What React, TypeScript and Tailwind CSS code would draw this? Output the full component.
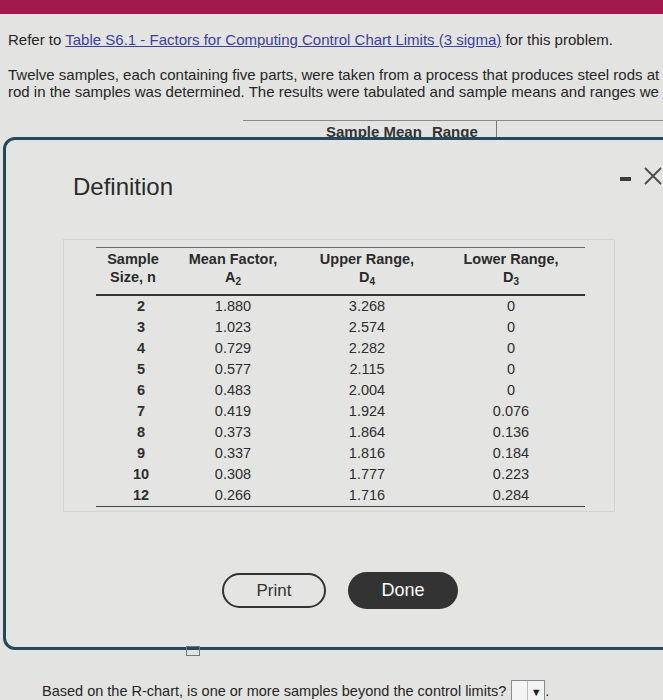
const rows: [string, string, string, string][] = [
  ["2", "1.880", "3.268", "0"],
  ["3", "1.023", "2.574", "0"],
  ["4", "0.729", "2.282", "0"],
  ["5", "0.577", "2.115", "0"],
  ["6", "0.483", "2.004", "0"],
  ["7", "0.419", "1.924", "0.076"],
  ["8", "0.373", "1.864", "0.136"],
  ["9", "0.337", "1.816", "0.184"],
  ["10", "0.308", "1.777", "0.223"],
  ["12", "0.266", "1.716", "0.284"],
];

const cols = "grid grid-cols-[90px_94px_174px_114px_17px]";

function FactorTable() {
  return (
    <div className="ml-[57px] mt-[38px] w-[552px] border border-[#d4d4d4] pb-[4px] pl-[32px] pt-[7px]">
      <div className="w-[489px] border-t-[1.5px] border-[#6a6a6a]">
        <div className={`${cols} border-b-2 border-[#333] pb-[8px] pt-[2px] text-[14.5px] font-bold leading-[18px] text-[#2b2b2b]`}>
          <div className="pr-[16px] text-center">
            Sample
            <br />
            Size, n
          </div>
          <div className="text-center">
            Mean Factor,
            <br />
            A<sub className="text-[10px]">2</sub>
          </div>
          <div className="text-center">
            Upper Range,
            <br />
            D<sub className="text-[10px]">4</sub>
          </div>
          <div className="text-center">
            Lower Range,
            <br />
            D<sub className="text-[10px]">3</sub>
          </div>
          <div />
        </div>
        <div className="border-b border-[#444]">
          {rows.map((r) => (
            <div key={r[0]} className={`${cols} h-[21px] items-center text-[14.5px] text-[#2e2e2e]`}>
              <div className="text-center font-bold">{r[0]}</div>
              <div className="text-center">{r[1]}</div>
              <div className="text-center">{r[2]}</div>
              <div className="text-center">{r[3]}</div>
              <div />
            </div>
          ))}
        </div>
      </div>
    </div>
  );
}

export default function App() {
  return (
    <div className="h-[700px] w-[663px] overflow-hidden bg-[#e3e3e2] font-['Liberation_Sans',Arial,sans-serif] text-[#262626]">
      <div className="h-[14px] bg-[#a3194b]" />

      <div className="px-2 pt-[17px] text-[15px] leading-[17px]">
        <p className="whitespace-nowrap">
          Refer to{" "}
          <span className="text-[#3b3fa3] underline">
            Table S6.1 - Factors for Computing Control Chart Limits (3 sigma)
          </span>{" "}
          for this problem.
        </p>
        <p className="mt-[18px] whitespace-nowrap">
          Twelve samples, each containing five parts, were taken from a process that produces steel rods at
        </p>
        <p className="whitespace-nowrap">
          rod in the samples was determined. The results were tabulated and sample means and ranges we
        </p>
      </div>

      <div className="ml-[243px] mt-[20px] flex h-[17px] overflow-hidden border-t border-[#8a8a8a] text-[15px] font-bold leading-[21px] text-[#333]">
        <div className="w-[83px]" />
        <div className="underline">Sample Mean</div>
        <div className="ml-[10px] w-[64px] underline">Range</div>
        <div className="border-l border-[#777]" />
      </div>

      <div className="relative ml-[3px] h-[513px] w-[700px] rounded-l-[12px] border-[3px] border-[#26485b] bg-[#e4e5e3]">
        <div className="flex w-[657px] items-start justify-between pt-[33px]">
          <h2 className="pl-[67px] text-[24px] leading-[28px] text-[#2b2b2b]">Definition</h2>
          <div className="flex items-center gap-[12px]">
            <div className="h-[4px] w-[11px] bg-[#3c3c3c]" />
            <svg width="20" height="18" viewBox="0 0 20 18" className="mt-[-6px]">
              <path d="M2 1 L18 17 M18 1 L2 17" stroke="#4a4a4a" strokeWidth="1.8" fill="none" />
            </svg>
          </div>
        </div>

        <FactorTable />

        <div className="mt-[60px] flex items-center pl-[216px]">
          <button className="h-[35px] w-[104px] rounded-full border-2 border-[#333] text-[17px] text-[#333]">
            Print
          </button>
          <button className="ml-[22px] h-[37px] w-[110px] rounded-full bg-[#333] text-[18px] text-white">
            Done
          </button>
        </div>
      </div>

      <div className="relative h-[12px]">
        <div className="absolute left-[186px] top-[-4px] h-[10px] w-[14px] border border-[#777]" />
      </div>

      <div className="flex items-start pl-[42px] pt-[21px] text-[14.5px] leading-[17px]">
        <span className="whitespace-nowrap">Based on the R-chart, is one or more samples beyond the control limits?</span>
        <div className="ml-[5px] mt-[-3px] flex h-[24px] w-[34px] border border-[#8a8a8a] bg-[#f4f4f4]">
          <div className="w-[16px] border-r border-[#bbb]" />
          <div className="flex flex-1 items-center justify-center text-[11px] text-[#222]">▼</div>
        </div>
        <span>.</span>
      </div>
    </div>
  );
}
